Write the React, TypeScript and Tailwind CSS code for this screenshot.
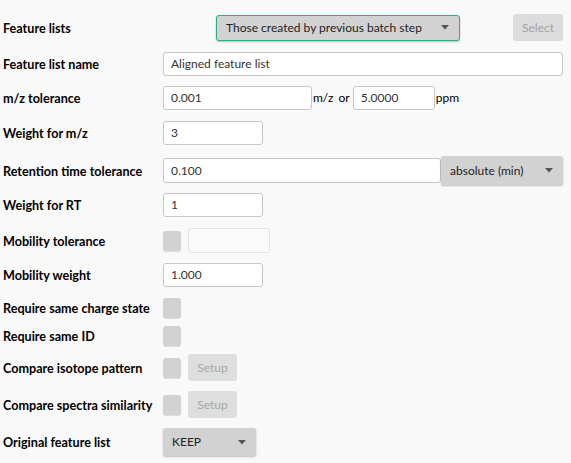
import React from "react";

const font = { fontFamily: "Lato, 'Noto Sans', sans-serif" };

function Arrow() {
  return (
    <svg width="8" height="5" viewBox="0 0 8 5" className="shrink-0">
      <path d="M0 0 L8 0 L4 4.5 Z" fill="#555" />
    </svg>
  );
}

function Combo({ text, width, focused }: { text: string; width: string; focused?: boolean }) {
  return (
    <div
      className={`${width} flex items-center justify-between rounded-[3px] bg-[#d2d2d2] pl-[9px] pr-[10px] text-[12px] text-[#222] shadow-[0_1px_2px_rgba(0,0,0,0.25)] ${
        focused ? "border border-[#2fae85]" : ""
      }`}
    >
      <span>{text}</span>
      <Arrow />
    </div>
  );
}

function Field({ value, width, disabled }: { value?: string; width: string; disabled?: boolean }) {
  return (
    <div
      className={`${width} flex items-center rounded-[3px] border px-[7px] text-[12px] ${
        disabled ? "border-[#e2e2e2] bg-[#fafafa] text-[#999]" : "border-[#c6c6c6] bg-white text-[#333]"
      }`}
    >
      {value}
    </div>
  );
}

function Check() {
  return <div className="h-[20px] w-[18px] rounded-[3px] bg-[#d2d2d2] shadow-[0_1px_1px_rgba(0,0,0,0.12)]" />;
}

function SetupButton() {
  return (
    <div className="ml-[7px] flex h-[27px] w-[49px] items-center justify-center rounded-[3px] bg-[#dedede] text-[12px] text-[#a6a6a6]">
      Setup
    </div>
  );
}

function Row({ label, className, children }: { label: string; className: string; children: React.ReactNode }) {
  return (
    <div className={`flex items-center ${className}`}>
      <div className="w-[160px] shrink-0 pt-[3px] text-[12.6px] font-bold text-black">{label}</div>
      <div className="flex h-full items-center">{children}</div>
    </div>
  );
}

export default function App() {
  return (
    <div className="min-h-[463px] w-[571px] bg-[#f9f9f9] pl-[3px] pt-[14px]" style={font}>
      <Row label="Feature lists" className="h-[27px]">
        <div className="ml-[53px] flex h-[27px] items-center">
          <div className="flex h-[26px] w-[244px]">
            <Combo text="Those created by previous batch step" width="w-[244px]" focused />
          </div>
          <div className="ml-[53px] flex h-[27px] w-[50px] items-center justify-center rounded-[3px] bg-[#dcdcdc] text-[12px] text-[#a3a3a3]">
            Select
          </div>
        </div>
      </Row>

      <Row label="Feature list name" className="mt-[11px] h-[24px]">
        <Field value="Aligned feature list" width="h-[24px] w-[400px]" />
      </Row>

      <Row label="m/z tolerance" className="mt-[10px] h-[24px]">
        <Field value="0.001" width="h-[24px] w-[149px]" />
        <span className="ml-[1px] text-[12px] text-black">m/z</span>
        <span className="ml-[5px] text-[12px] text-black">or</span>
        <div className="ml-[3px] flex h-[24px]">
          <Field value="5.0000" width="h-[24px] w-[82px]" />
        </div>
        <span className="ml-[1px] text-[12px] text-black">ppm</span>
      </Row>

      <Row label="Weight for m/z" className="mt-[11px] h-[24px]">
        <Field value="3" width="h-[24px] w-[100px]" />
      </Row>

      <Row label="Retention time tolerance" className="mt-[11px] h-[29px]">
        <Field value="0.100" width="h-[25px] w-[278px]" />
        <div className="flex h-[29px]">
          <Combo text="absolute (min)" width="w-[122px]" />
        </div>
      </Row>

      <Row label="Weight for RT" className="mt-[8px] h-[24px]">
        <Field value="1" width="h-[24px] w-[100px]" />
      </Row>

      <Row label="Mobility tolerance" className="mt-[11px] h-[25px]">
        <Check />
        <div className="ml-[7px] flex h-[25px]">
          <Field width="h-[25px] w-[82px]" disabled />
        </div>
      </Row>

      <Row label="Mobility weight" className="mt-[10px] h-[24px]">
        <Field value="1.000" width="h-[24px] w-[100px]" />
      </Row>

      <Row label="Require same charge state" className="mt-[11px] h-[20px]">
        <Check />
      </Row>

      <Row label="Require same ID" className="mt-[8px] h-[20px]">
        <Check />
      </Row>

      <Row label="Compare isotope pattern" className="mt-[8px] h-[27px]">
        <Check />
        <SetupButton />
      </Row>

      <Row label="Compare spectra similarity" className="mt-[10px] h-[27px]">
        <Check />
        <SetupButton />
      </Row>

      <Row label="Original feature list" className="mt-[10px] h-[28px]">
        <div className="flex h-[28px]">
          <Combo text="KEEP" width="w-[93px]" />
        </div>
      </Row>
    </div>
  );
}
